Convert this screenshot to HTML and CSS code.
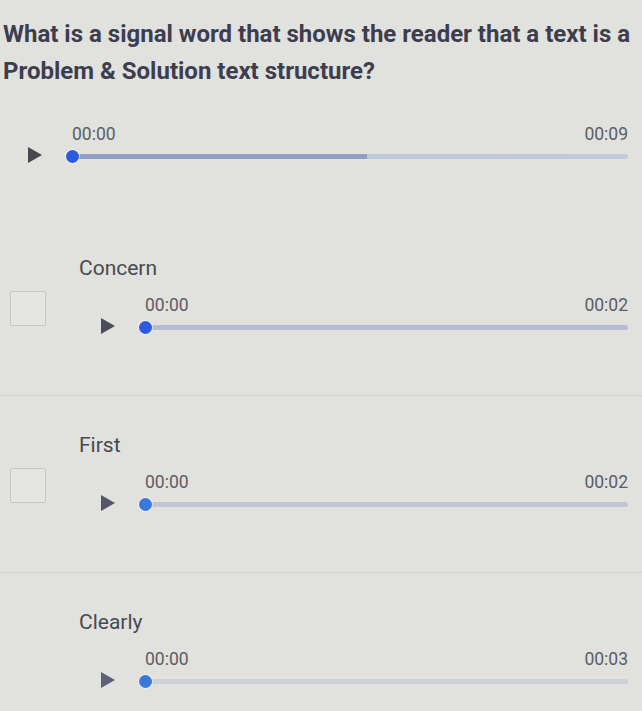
FILE: index.html
```html
<!DOCTYPE html>
<html lang="en">
<head>
<meta charset="utf-8">
<title>Signal word question</title>
<link rel="stylesheet" href="styles.css">
</head>
<body>
<main class="page">
  <h1 class="question">What is a signal word that shows the reader that a text is a Problem &amp; Solution text structure?</h1>

  <div class="player player-q">
    <div class="times"><span>00:00</span><span>00:09</span></div>
    <span class="play"><svg viewBox="0 0 16 18" width="16" height="18"><path d="M1 1 L15 9 L1 17 Z" fill="#46474f"/></svg></span>
    <div class="track"><div class="rail rail-buffered"></div><span class="thumb"></span></div>
  </div>

  <ul class="options">
    <li class="option">
      <span class="label">Concern</span>
      <span class="checkbox"></span>
      <div class="player">
        <div class="times"><span>00:00</span><span>00:02</span></div>
        <span class="play"><svg viewBox="0 0 16 18" width="16" height="18"><path d="M1 1 L15 9 L1 17 Z" fill="#4b4c5a"/></svg></span>
        <div class="track"><div class="rail"></div><span class="thumb"></span></div>
      </div>
    </li>
    <li class="option">
      <span class="label">First</span>
      <span class="checkbox"></span>
      <div class="player">
        <div class="times"><span>00:00</span><span>00:02</span></div>
        <span class="play"><svg viewBox="0 0 16 18" width="16" height="18"><path d="M1 1 L15 9 L1 17 Z" fill="#55566c"/></svg></span>
        <div class="track"><div class="rail rail-light"></div><span class="thumb thumb-light"></span></div>
      </div>
    </li>
    <li class="option">
      <span class="label">Clearly</span>
      <span class="checkbox checkbox-hidden"></span>
      <div class="player">
        <div class="times"><span>00:00</span><span>00:03</span></div>
        <span class="play"><svg viewBox="0 0 16 18" width="16" height="18"><path d="M1 1 L15 9 L1 17 Z" fill="#5e5f78"/></svg></span>
        <div class="track"><div class="rail rail-faint"></div><span class="thumb thumb-light"></span></div>
      </div>
    </li>
  </ul>
</main>
</body>
</html>
```

FILE: styles.css
```css
html, body {
  margin: 0;
  padding: 0;
}

body {
  background: #e1e1dd;
  font-family: Roboto, "Liberation Sans", sans-serif;
  color: #44464f;
  width: 642px;
  overflow: hidden;
}

.page {
  display: block;
}

.question {
  margin: 0;
  padding: 16px 4px 0 3px;
  font-size: 24px;
  font-weight: 700;
  line-height: 37px;
  color: #3c3e4f;
}

.player {
  display: grid;
  grid-template-columns: 39px 1fr;
  grid-template-rows: 20px 13px;
  row-gap: 6px;
}

.player-q {
  margin: 34px 14px 0 27px;
}

.times {
  grid-column: 2;
  grid-row: 1;
  display: flex;
  justify-content: space-between;
  padding-left: 6px;
  font-size: 17.5px;
  font-weight: 400;
  line-height: 20px;
  color: #5b5d66;
}

.play {
  grid-column: 1;
  grid-row: 2;
  align-self: center;
  display: flex;
  margin-top: -4px;
}

.track {
  grid-column: 2;
  grid-row: 2;
  position: relative;
  display: flex;
  align-items: center;
  height: 13px;
}

.rail {
  flex: 1;
  height: 5px;
  margin-left: 6px;
  border-radius: 3px;
  background: #b4bdd3;
}

.rail-buffered {
  background: linear-gradient(to right, #8e9fc6 0, #8e9fc6 53%, #bfcad8 53%, #c3cad9 100%);
}

.rail-light {
  background: #bfc6d6;
}

.rail-faint {
  background: #cdd1da;
}

.thumb {
  position: absolute;
  left: 0;
  top: 0;
  width: 13px;
  height: 13px;
  border-radius: 50%;
  background: #2d5be0;
  box-shadow: 0 0 0 1px rgba(255, 255, 255, 0.5);
}

.thumb-light {
  background: #3a78dc;
}

.options {
  list-style: none;
  margin: 56px 0 0;
  padding: 0;
}

.option {
  display: grid;
  grid-template-columns: 36px 1fr;
  grid-template-rows: 26px auto;
  column-gap: 33px;
  row-gap: 10px;
  padding: 36px 14px 61px 10px;
  border-bottom: 1px solid #cfcfcb;
}

.label {
  grid-column: 2;
  grid-row: 1;
  font-size: 21px;
  line-height: 26px;
  color: #474952;
}

.checkbox {
  grid-column: 1;
  grid-row: 2;
  width: 34px;
  height: 33px;
  border: 1px solid #c6c6c3;
  border-radius: 2px;
  background: #e4e4e0;
}

.checkbox-hidden {
  visibility: hidden;
}

.option .player {
  grid-column: 2;
  grid-row: 2;
  margin: 4px 0 0 21px;
}
```
